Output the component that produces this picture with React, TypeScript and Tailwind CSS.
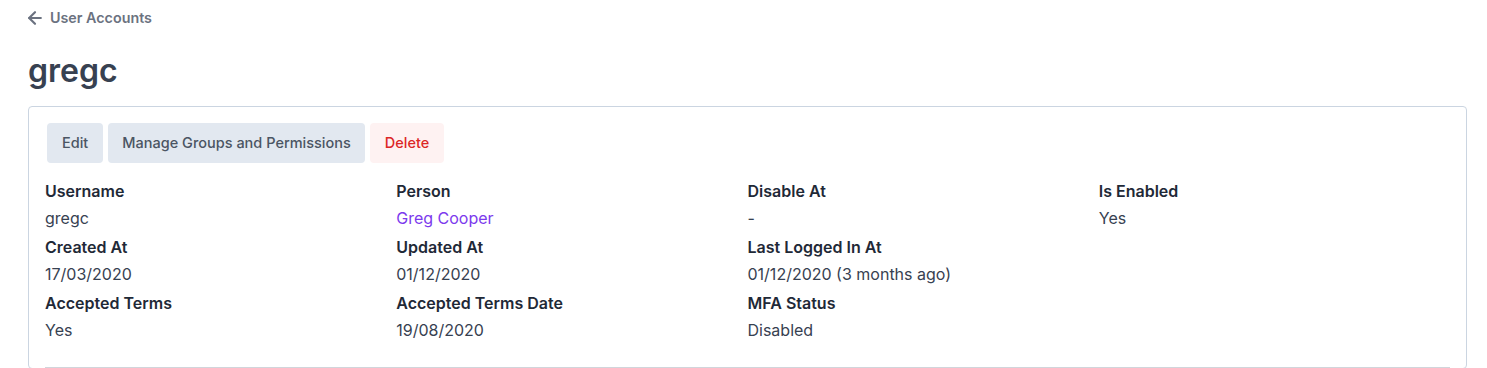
import React from 'react';
import { ArrowLeft } from 'lucide-react';

const fields: { label: string; value: string; link?: boolean }[] = [
  { label: 'Username', value: 'gregc' },
  { label: 'Person', value: 'Greg Cooper', link: true },
  { label: 'Disable At', value: '-' },
  { label: 'Is Enabled', value: 'Yes' },
  { label: 'Created At', value: '17/03/2020' },
  { label: 'Updated At', value: '01/12/2020' },
  { label: 'Last Logged In At', value: '01/12/2020 (3 months ago)' },
  { label: '', value: '' },
  { label: 'Accepted Terms', value: 'Yes' },
  { label: 'Accepted Terms Date', value: '19/08/2020' },
  { label: 'MFA Status', value: 'Disabled' },
];

export default function App() {
  return (
    <div className="min-h-screen bg-white pl-7 pr-5 pt-2" style={{ fontFamily: 'Inter, "Noto Sans", sans-serif' }}>
      <a href="#" className="flex items-center gap-[5px] h-5 text-[14.3px] font-semibold text-[#6b7280]">
        <ArrowLeft className="w-5 h-5 -ml-[3px]" strokeWidth={2.6} />
        User Accounts
      </a>
      <h1 className="mt-[25px] text-[32px] leading-9 font-semibold text-[#374151]">gregc</h1>
      <div className="mt-[17px] border border-[#cbd5e1] rounded px-4 pt-4">
        <div className="flex gap-[5px] ml-[2px]">
          <button type="button" className="h-10 px-[15px] rounded bg-[#e2e8f0] text-[14.5px] font-medium text-[#4b5563]">
            Edit
          </button>
          <button type="button" className="h-10 px-[14px] rounded bg-[#e2e8f0] text-[14.5px] font-medium text-[#4b5563]">
            Manage Groups and Permissions
          </button>
          <button type="button" className="h-10 px-[15px] rounded bg-[#fef2f2] text-[14.5px] font-medium text-[#dc2626]">
            Delete
          </button>
        </div>
        <div className="grid grid-cols-4 mt-[14px]">
          {fields.map((f, i) => (
            <div key={i} className="h-14">
              <div className="h-[27px] leading-7 text-base font-semibold text-[#1f2937]">{f.label}</div>
              <div className={`h-[29px] leading-7 text-base ${f.link ? 'text-[#7c3aed]' : 'text-[#374151]'}`}>
                {f.value}
              </div>
            </div>
          ))}
        </div>
        <div className="mt-[22px] border-t border-[#d1d5db]" />
      </div>
    </div>
  );
}
